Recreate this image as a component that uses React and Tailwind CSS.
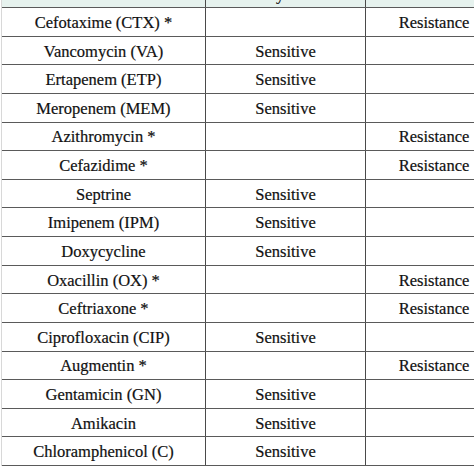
import React from 'react';

const rows = [
  ['Cefotaxime (CTX) *', '', 'Resistance'],
  ['Vancomycin (VA)', 'Sensitive', ''],
  ['Ertapenem (ETP)', 'Sensitive', ''],
  ['Meropenem (MEM)', 'Sensitive', ''],
  ['Azithromycin *', '', 'Resistance'],
  ['Cefazidime *', '', 'Resistance'],
  ['Septrine', 'Sensitive', ''],
  ['Imipenem (IPM)', 'Sensitive', ''],
  ['Doxycycline', 'Sensitive', ''],
  ['Oxacillin (OX) *', '', 'Resistance'],
  ['Ceftriaxone *', '', 'Resistance'],
  ['Ciprofloxacin (CIP)', 'Sensitive', ''],
  ['Augmentin *', '', 'Resistance'],
  ['Gentamicin (GN)', 'Sensitive', ''],
  ['Amikacin', 'Sensitive', ''],
  ['Chloramphenicol (C)', 'Sensitive', ''],
];

export default function App() {
  return (
    <div className="w-[474px] h-[474px] overflow-hidden bg-white text-[16.5px] text-[#111] font-['Liberation_Serif',serif] [-webkit-text-stroke:0.2px_#111]">
      <div className="w-[520px] ml-[1px] border-l border-[#d8d8d8]">
        {/* header row, mostly cropped off */}
        <div className="flex h-[8px] bg-[#e6f2ee] border-b-[1.5px] border-[#5a5a5a] overflow-hidden">
          <div className="w-[204px] border-r-[1.5px] border-[#4a4a4a]" />
          <div className="w-[160px] border-r-[1.5px] border-[#4a4a4a] relative">
            <span className="absolute left-[70px] -top-[13px] leading-none">y</span>
          </div>
          <div className="flex-1" />
        </div>
        {rows.map(([name, sens, res], i) => (
          <div key={i} className="flex h-[28.625px] border-b-[1.5px] border-[#5a5a5a]">
            <div className="w-[204px] border-r-[1.5px] border-[#4a4a4a] flex items-center justify-center pt-[3px]">{name}</div>
            <div className="w-[160px] border-r-[1.5px] border-[#4a4a4a] flex items-center justify-center pt-[3px]">{sens}</div>
            <div className="w-[136px] flex items-center justify-center pt-[3px]">{res}</div>
          </div>
        ))}
      </div>
    </div>
  );
}
